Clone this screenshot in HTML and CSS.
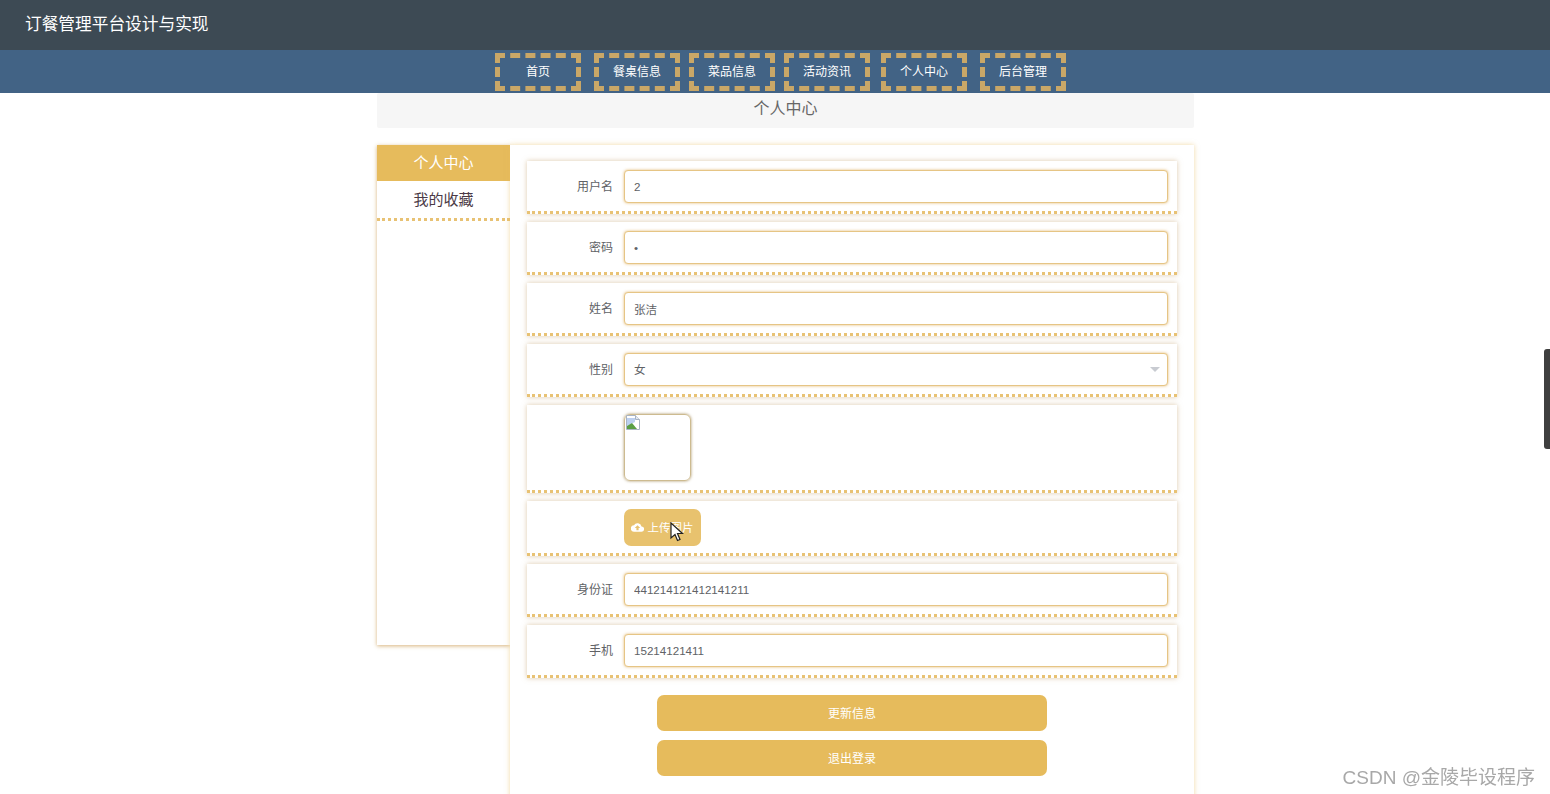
FILE: index.html
```html
<!DOCTYPE html>
<html lang="zh-CN">
<head>
    <meta charset="UTF-8">
    <link rel="stylesheet" href="styles.css">
    <title>订餐管理平台设计与实现</title>
</head>
<body>
  <div class="top-bar">订餐管理平台设计与实现</div>

  <div class="nav-bar">
    <a class="nav-item">首页</a>
    <a class="nav-item">餐桌信息</a>
    <a class="nav-item">菜品信息</a>
    <a class="nav-item">活动资讯</a>
    <a class="nav-item">个人中心</a>
    <a class="nav-item">后台管理</a>
  </div>

  <div class="page">
    <div class="page-title">个人中心</div>

    <div class="center-box">
      <div class="side-menu">
        <div class="side-item active">个人中心</div>
        <div class="side-item">我的收藏</div>
      </div>

      <div class="form-box">
        <div class="form-row">
          <label class="form-label">用户名</label>
          <input class="form-input" type="text" value="2">
        </div>
        <div class="form-row">
          <label class="form-label">密码</label>
          <input class="form-input" type="password" value="1">
        </div>
        <div class="form-row">
          <label class="form-label">姓名</label>
          <input class="form-input" type="text" value="张洁">
        </div>
        <div class="form-row">
          <label class="form-label">性别</label>
          <div class="form-input select-box">女</div>
        </div>
        <div class="form-row photo-row">
          <span class="form-label"></span>
          <div class="photo-box">
            <!-- broken image icon -->
            <svg class="broken-img" width="16" height="16" viewBox="0 0 16 16">
              <path d="M1.5 .5h9l4 4v10h-13z" fill="#fff" stroke="#a9b4c4"/>
              <path d="M10.5 .5v4h4" fill="#e3e8f0" stroke="#a9b4c4"/>
              <path d="M2 3h8v4l-8 4z" fill="#bcd0f0"/>
              <path d="M2 14v-3l5-3 5 6z" fill="#5a9e45"/>
            </svg>
          </div>
        </div>
        <div class="form-row upload-row">
          <span class="form-label"></span>
          <button class="upload-btn" type="button">
            <svg width="13" height="13" viewBox="0 0 24 24"><path fill="#fff" d="M19.400 10A7.500 7.500 0 0 0 5.400 8 6 6 0 0 0 6 20h13a5 5 0 0 0 .4-10zM14 13v4h-4v-4H7l5-5 5 5z"/></svg>
            上传图片
            <!-- mouse pointer caught in the screenshot -->
            <svg class="cursor" width="14" height="20" viewBox="0 0 14 20"><path d="M1 1v15l4-3.500 2.500 6 2.500-1-2.500-6h5z" fill="#fff" stroke="#222" stroke-width="1.200"/></svg>
          </button>
        </div>
        <div class="form-row">
          <label class="form-label">身份证</label>
          <input class="form-input" type="text" value="441214121412141211">
        </div>
        <div class="form-row">
          <label class="form-label">手机</label>
          <input class="form-input" type="text" value="15214121411">
        </div>

        <button class="big-btn" type="button">更新信息</button>
        <button class="big-btn" type="button">退出登录</button>
      </div>
    </div>
  </div>

  <div class="scroll-thumb"></div>
  <div class="watermark">CSDN @金陵毕设程序</div>
</body>
</html>
```

FILE: styles.css
```css
html, body {
  height: 794px;
  overflow: hidden;
}

body {
  margin: 0;
  padding: 0;
  background-color: #fff;
  font-family: "Liberation Sans", "Noto Sans CJK SC", sans-serif;
  font-size: 12px;
  color: #606266;
}

.top-bar {
  height: 50px;
  line-height: 49px;
  padding-left: 25px;
  background-color: #3d4a54;
  color: #fff;
  font-size: 16.7px;
}

.nav-bar {
  display: flex;
  height: 43px;
  padding: 3px 0 0 495px;
  box-sizing: border-box;
  background-color: #426385;
}

.nav-item {
  width: 86px;
  height: 38px;
  box-sizing: border-box;
  margin-right: 9px;
  border: 5px dashed #c9a767;
  line-height: 28px;
  text-align: center;
  color: #fff;
  font-size: 12px;
}

.nav-item:nth-child(1) { margin-right: 13px; }
.nav-item:nth-child(4) { margin-right: 11px; }
.nav-item:nth-child(5) { margin-right: 13px; }

.page {
  width: 817px;
  margin-left: 377px;
}

.page-title {
  height: 35px;
  line-height: 31px;
  margin-bottom: 17px;
  background-color: #f6f6f6;
  border-radius: 2px;
  text-align: center;
  font-size: 16px;
  color: #666;
}

.center-box {
  display: flex;
  align-items: flex-start;
}

.side-menu {
  width: 133px;
  height: 500px;
  flex-shrink: 0;
  background-color: #fff;
  box-shadow: 0 1px 4px rgba(205, 160, 90, 0.8);
}

.side-item {
  height: 37px;
  line-height: 37px;
  text-align: center;
  font-size: 15px;
  color: #4b3a46;
  border-bottom: 3px dotted #e8c274;
}

.side-item.active {
  height: 36px;
  line-height: 36px;
  background-color: #e6bb5c;
  color: #fff;
  border-bottom: none;
}

.form-box {
  position: relative;
  width: 650px;
  height: 700px;
  padding: 16px 17px;
  background-color: #fff;
  box-shadow: 0 0 5px rgba(230, 187, 92, 0.55);
}

.form-row {
  display: flex;
  align-items: flex-start;
  padding: 9px 0 8px;
  margin-bottom: 8px;
  background-color: #fff;
  border-bottom: 3px dotted #e8c274;
  box-shadow: 0 0 5px rgba(190, 150, 90, 0.5);
}

.photo-row {
  padding-bottom: 9px;
}

.upload-row {
  padding: 8px 0 7px;
}

.form-label {
  width: 86px;
  height: 33px;
  margin-right: 11px;
  line-height: 35px;
  flex-shrink: 0;
  text-align: right;
}

.form-input {
  width: 544px;
  height: 33px;
  box-sizing: border-box;
  padding: 0 9px;
  border: 1px solid #e6c585;
  border-radius: 4px;
  box-shadow: 0 0 3px rgba(225, 175, 90, 0.85);
  font-family: inherit;
  font-size: 11.6px;
  line-height: 31px;
  color: #606266;
  background-color: #fff;
}

.select-box {
  position: relative;
  line-height: 32px;
}

.select-box::after {
  content: "";
  position: absolute;
  top: 13px;
  right: 7px;
  border-top: 5px solid #c8cbd1;
  border-left: 5px solid transparent;
  border-right: 5px solid transparent;
}

.photo-box {
  position: relative;
  width: 67px;
  height: 67px;
  box-sizing: border-box;
  border: 1px solid #cdbb90;
  border-radius: 6px;
  box-shadow: 0 0 3px rgba(150, 120, 60, 0.8);
}

.broken-img {
  position: absolute;
  top: 0;
  left: 0;
}

.upload-btn {
  position: relative;
  width: 77px;
  height: 37px;
  padding: 0 0 2px;
  border: none;
  border-radius: 7px;
  background-color: #e8c26e;
  color: #fff;
  font-family: inherit;
  font-size: 11.5px;
}

.upload-btn svg {
  vertical-align: -2px;
}

.upload-btn .cursor {
  position: absolute;
  top: 13px;
  left: 46px;
}

.big-btn {
  display: block;
  width: 390px;
  height: 36px;
  padding: 0 0 2px;
  margin: 9px auto 0;
  border: none;
  border-radius: 7px;
  background-color: #e6bb5c;
  color: #fff;
  font-family: inherit;
  font-size: 12px;
}

.form-row + .big-btn {
  margin-top: 17px;
}

.scroll-thumb {
  position: fixed;
  top: 349px;
  right: 0;
  width: 6px;
  height: 100px;
  background-color: #3f3f3f;
  border-radius: 3px 0 0 3px;
}

.watermark {
  position: fixed;
  right: 15px;
  bottom: 5px;
  font-size: 19px;
  color: #a8a8a8;
}
```
